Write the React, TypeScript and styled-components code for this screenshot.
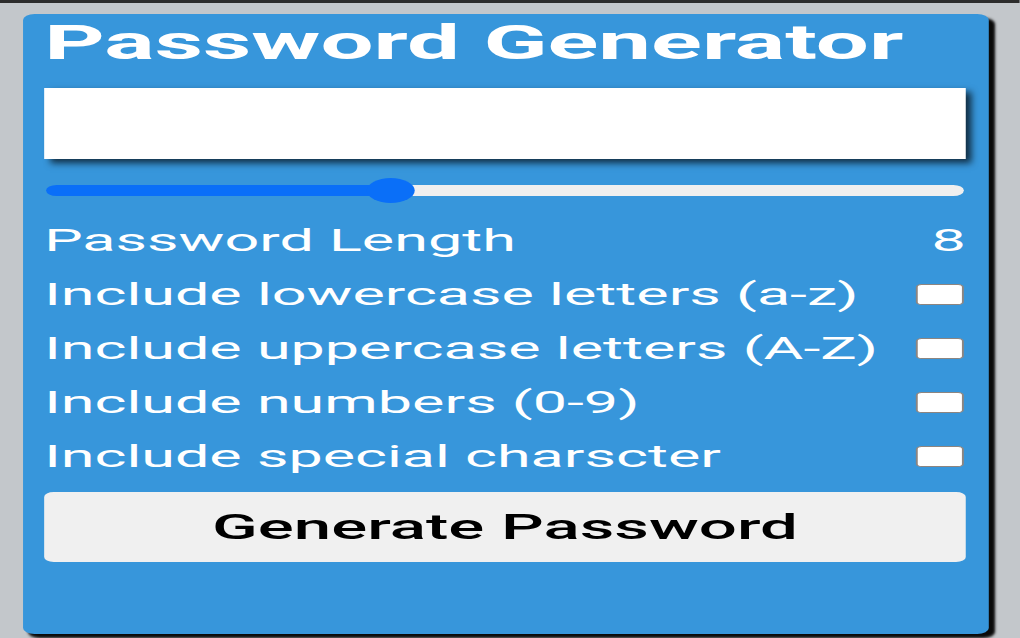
import { useState } from 'react';
import styled, { createGlobalStyle } from 'styled-components';

const GlobalStyle = createGlobalStyle`
  html, body {
    margin: 0;
    padding: 0;
    background: #c3c7cb;
    overflow: hidden;
  }
  * {
    box-sizing: border-box;
  }
`;

// the whole panel is drawn narrow and stretched sideways
const Stage = styled.div`
  width: 531px;
  height: 638px;
  border-top: 3px solid #2c2c2c;
  padding: 11px 0 0 11.5px;
  transform: scaleX(1.92);
  transform-origin: 0 0;
  font-family: Roboto, 'Liberation Sans', sans-serif;
`;

const Card = styled.div`
  width: 503px;
  height: 620px;
  background: #3796db;
  border-radius: 6px;
  box-shadow: 3px 4px 2px #0a0a0a;
  padding: 0 11.5px;
  display: flex;
  flex-direction: column;
`;

const Title = styled.h1`
  margin: 0;
  font-size: 49px;
  font-weight: 700;
  line-height: normal;
  color: #fff;
  white-space: nowrap;
`;

const Output = styled.input`
  margin-top: 17px;
  height: 71px;
  width: 100%;
  border: none;
  background: #fff;
  box-shadow: 3px 4px 5px rgba(0, 0, 0, 0.7);
  font-family: inherit;
  font-size: 30px;
  padding: 0 10px;
  outline: none;
`;

const Slider = styled.input<{ $fill: number }>`
  -webkit-appearance: none;
  appearance: none;
  margin: 19px 1px 0;
  width: calc(100% - 2px);
  height: 25px;
  background: transparent;
  &::-webkit-slider-runnable-track {
    height: 11px;
    border-radius: 6px;
    background: linear-gradient(
      to right,
      #0a6ff8 0,
      #0a6ff8 ${({ $fill }) => $fill}%,
      #efefef ${({ $fill }) => $fill}%,
      #efefef 100%
    );
  }
  &::-webkit-slider-thumb {
    -webkit-appearance: none;
    width: 25px;
    height: 25px;
    margin-top: -7px;
    border: none;
    border-radius: 50%;
    background: #0a6ff8;
  }
`;

const Options = styled.div`
  margin-top: 19px;
  display: flex;
  flex-direction: column;
  gap: 18px;
`;

const Row = styled.label`
  display: flex;
  align-items: center;
  justify-content: space-between;
  height: 36px;
  font-size: 31.8px;
  line-height: 36px;
  color: #fff;
  white-space: nowrap;
`;

const Value = styled.span`
  padding-right: 0;
`;

const Check = styled.input`
  -webkit-appearance: none;
  appearance: none;
  margin: 0 1px 0 0;
  width: 25px;
  height: 21px;
  background: #fff;
  border: 1px solid #8d8580;
  border-radius: 3px;
  &:checked {
    background: #0a6ff8;
    border-color: #0a6ff8;
  }
`;

const GenerateButton = styled.button`
  margin-top: 18px;
  height: 70px;
  width: 100%;
  border: none;
  border-radius: 5px;
  background: #f0f0f0;
  color: #000;
  font-family: inherit;
  font-size: 35px;
  font-weight: 500;
  cursor: pointer;
`;

const MIN = 1;
const MAX = 20;

const sets = [
  { key: 'lower', label: 'Include lowercase letters (a-z)', chars: 'abcdefghijklmnopqrstuvwxyz' },
  { key: 'upper', label: 'Include uppercase letters (A-Z)', chars: 'ABCDEFGHIJKLMNOPQRSTUVWXYZ' },
  { key: 'numbers', label: 'Include numbers (0-9)', chars: '0123456789' },
  { key: 'special', label: 'Include special charscter', chars: '!@#$%^&*()-_=+[]{};:,.<>?' },
];

export default function App() {
  const [length, setLength] = useState(8);
  const [picked, setPicked] = useState<Record<string, boolean>>({});
  const [password, setPassword] = useState('');

  const fill = ((length - MIN) / (MAX - MIN)) * 100;

  const generate = () => {
    const pool = sets.filter((s) => picked[s.key]).map((s) => s.chars).join('');
    if (!pool) return;
    let out = '';
    for (let i = 0; i < length; i++) {
      out += pool[Math.floor(Math.random() * pool.length)];
    }
    setPassword(out);
  };

  return (
    <>
      <GlobalStyle />
      <Stage>
        <Card>
          <Title>Password Generator</Title>
          <Output type="text" readOnly value={password} />
          <Slider
            type="range"
            min={MIN}
            max={MAX}
            value={length}
            $fill={fill}
            onChange={(e) => setLength(Number(e.target.value))}
          />
          <Options>
            <Row>
              Password Length
              <Value>{length}</Value>
            </Row>
            {sets.map((s) => (
              <Row key={s.key}>
                {s.label}
                <Check
                  type="checkbox"
                  checked={!!picked[s.key]}
                  onChange={(e) => setPicked({ ...picked, [s.key]: e.target.checked })}
                />
              </Row>
            ))}
          </Options>
          <GenerateButton onClick={generate}>Generate Password</GenerateButton>
        </Card>
      </Stage>
    </>
  );
}
